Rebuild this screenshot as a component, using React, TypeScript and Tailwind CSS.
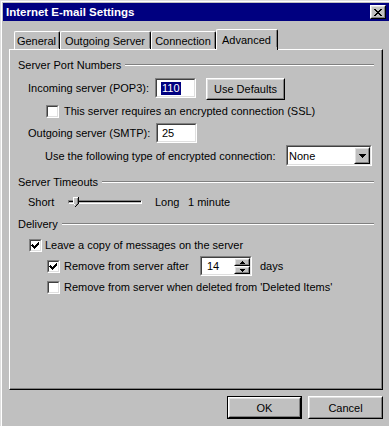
import React from 'react';

const font = "font-['Liberation_Sans',Arial,sans-serif] text-[11px] leading-[14px] text-black";

const Sunken: React.FC<{ className?: string; children?: React.ReactNode }> = ({ className = '', children }) => (
  <div className={`border border-t-[#808080] border-l-[#808080] border-b-white border-r-white ${className}`}>
    <div className="w-full h-full border border-t-[#404040] border-l-[#404040] border-b-[#dfdfdf] border-r-[#dfdfdf] bg-white flex items-center">
      {children}
    </div>
  </div>
);

const Raised: React.FC<{ className?: string; inner?: string; children?: React.ReactNode }> = ({ className = '', inner = '', children }) => (
  <div className={`border border-t-white border-l-white border-b-black border-r-black bg-[#c0c0c0] ${className}`}>
    <div className={`w-full h-full border border-t-[#dfdfdf] border-l-[#dfdfdf] border-b-[#808080] border-r-[#808080] flex items-center justify-center ${inner}`}>
      {children}
    </div>
  </div>
);

const Checkbox: React.FC<{ checked?: boolean }> = ({ checked }) => (
  <Sunken className="w-[13px] h-[13px] shrink-0">
    {checked && (
      <svg width="9" height="9" viewBox="0 0 9 9" className="block" shapeRendering="crispEdges">
        <path d="M1 3h1v1h1v1h1v-1h1v-1h1v-1h1v-1h1v3h-1v1h-1v1h-1v1h-1v1h-1v-1h-1v-1h-1v-1h-1z" fill="#000" />
      </svg>
    )}
  </Sunken>
);

const GroupHeader: React.FC<{ label: string; mt: string }> = ({ label, mt }) => (
  <div className={`flex items-center h-[14px] ${mt}`}>
    <span className="whitespace-nowrap">{label}</span>
    <div className="flex-1 ml-[4px] h-[2px] border-t border-t-[#808080] border-b border-b-white" />
  </div>
);

const Tab: React.FC<{ label: string; w: string; active?: boolean }> = ({ label, w, active }) => (
  <div
    className={`${w} ${active ? 'h-[21px] -mb-[1px] relative z-10 pb-[3px]' : 'h-[18px] pb-[1px]'} bg-[#c0c0c0] border-t border-l border-t-white border-l-white rounded-tl-[2px] rounded-tr-[2px] border-r border-r-black flex items-end`}
  >
    <div className="w-full h-full border-r border-r-[#808080] flex items-end justify-center">
      <span className="whitespace-nowrap">{label}</span>
    </div>
  </div>
);

const Arrow: React.FC<{ up?: boolean; size?: 'sm' | 'md' }> = ({ up, size = 'md' }) =>
  size === 'md' ? (
    <svg width="7" height="4" viewBox="0 0 7 4" shapeRendering="crispEdges" className="block">
      <path d="M0 0h7v1h-1v1h-1v1h-1v1h-1v-1h-1v-1h-1v-1h-1z" fill="#000" />
    </svg>
  ) : (
    <svg width="5" height="3" viewBox="0 0 5 3" shapeRendering="crispEdges" className="block">
      <path d={up ? 'M2 0h1v1h1v1h1v1h-5v-1h1v-1h1z' : 'M0 0h5v1h-1v1h-1v1h-1v-1h-1v-1h-1z'} fill="#000" />
    </svg>
  );

export default function App() {
  return (
    <div className={`w-[389px] h-[426px] bg-[#c0c0c0] border-t border-l border-t-[#dfdfdf] border-l-[#dfdfdf] ${font}`}>
      <div className="w-full h-full border-t border-l border-t-white border-l-white pt-[1px] pl-[1px]">
        {/* title bar */}
        <div className="h-[18px] bg-[#000080] flex items-center justify-between pl-[3px] pr-[3px]">
          <span className="text-white font-bold text-[11.5px] whitespace-nowrap">Internet E-mail Settings</span>
          <Raised className="w-[16px] h-[14px]">
            <svg width="8" height="7" viewBox="0 0 8 7" shapeRendering="crispEdges" className="block">
              <path d="M0 0h2v1h1v1h2v-1h1v-1h2v1h-1v1h-1v1h-1v1h1v1h1v1h1v1h-2v-1h-1v-1h-2v1h-1v1h-2v-1h1v-1h1v-1h1v-1h-1v-1h-1v-1h-1z" fill="#000" />
            </svg>
          </Raised>
        </div>

        {/* tabs */}
        <div className="mt-[8px] h-[20px] flex items-end pl-[11px]">
          <Tab label="General" w="w-[46px]" />
          <Tab label="Outgoing Server" w="w-[91px]" />
          <Tab label="Connection" w="w-[65px]" />
          <Tab label="Advanced" w="w-[62px]" active />
        </div>

        {/* panel */}
        <div className="ml-[6px] w-[374px] h-[341px] border-t border-l border-t-white border-l-white border-r border-b border-r-black border-b-black">
          <div className="w-full h-full border-r border-b border-r-[#808080] border-b-[#808080] pl-[8px] pr-[7px] flex flex-col">
            <GroupHeader label="Server Port Numbers" mt="mt-[8px]" />

            <div className="flex items-start h-[22px] mt-[6px] pl-[10px]">
              <span className="w-[127px] h-[20px] flex items-center whitespace-nowrap">Incoming server (POP3):</span>
              <Sunken className="w-[41px] h-[20px]">
                <span className="ml-[4px] bg-[#000080] text-white px-[1px] leading-[13px]">110</span>
              </Sunken>
              <Raised className="ml-[10px] w-[79px] h-[22px]">Use Defaults</Raised>
            </div>

            <div className="flex items-center h-[14px] mt-[4px] pl-[28px]">
              <Checkbox />
              <span className="ml-[5px] whitespace-nowrap">This server requires an encrypted connection (SSL)</span>
            </div>

            <div className="flex items-center h-[20px] mt-[5px] pl-[10px]">
              <span className="w-[128px] whitespace-nowrap">Outgoing server (SMTP):</span>
              <Sunken className="w-[41px] h-[20px]">
                <span className="ml-[4px]">25</span>
              </Sunken>
            </div>

            <div className="flex items-center h-[21px] mt-[2px] pl-[27px]">
              <span className="w-[241px] whitespace-nowrap">Use the following type of encrypted connection:</span>
              <Sunken className="w-[86px] h-[21px]">
                <span className="flex-1 pl-[1px]">None</span>
                <Raised className="w-[16px] h-[17px]">
                  <Arrow />
                </Raised>
              </Sunken>
            </div>

            <GroupHeader label="Server Timeouts" mt="mt-[9px]" />

            <div className="flex items-center h-[14px] mt-[6px] pl-[10px]">
              <span className="w-[40px]">Short</span>
              <div className="relative w-[74px] h-[14px] flex items-center">
                <div className="w-full h-[4px] border-t border-l border-t-[#808080] border-l-[#808080] border-b border-r border-b-white border-r-white">
                  <div className="w-full h-full border-t border-t-black bg-[#c0c0c0]" />
                </div>
                <svg width="6" height="10" viewBox="0 0 6 10" shapeRendering="crispEdges" className="absolute left-[5px] top-[2px]">
                  <path d="M0 0h6v7h-1v1h-1v1h-1v1h-1v-1h-1v-1h-1z" fill="#c0c0c0" />
                  <path d="M0 0h5v1h-4v6h1v1h-1v-1h-1z" fill="#fff" />
                  <path d="M5 0h1v7h-1v1h-1v1h-1v1h-1v-1h1v-1h1v-1h1z" fill="#000" />
                  <path d="M4 1h1v6h-1v1h-1v-1h1z" fill="#808080" />
                </svg>
              </div>
              <span className="ml-[13px] w-[33px]">Long</span>
              <span className="whitespace-nowrap">1 minute</span>
            </div>

            <GroupHeader label="Delivery" mt="mt-[8px]" />

            <div className="flex items-center h-[14px] mt-[7px] pl-[11px]">
              <Checkbox checked />
              <span className="ml-[3px] whitespace-nowrap">Leave a copy of messages on the server</span>
            </div>

            <div className="flex items-center h-[20px] mt-[4px] pl-[29px]">
              <Checkbox checked />
              <span className="ml-[4px] w-[136px] whitespace-nowrap">Remove from server after</span>
              <Sunken className="w-[52px] h-[20px]">
                <span className="flex-1 pl-[5px]">14</span>
                <div className="flex flex-col h-full w-[16px]">
                  <Raised className="w-full h-[8px]">
                    <Arrow up size="sm" />
                  </Raised>
                  <Raised className="w-full h-[8px]">
                    <Arrow size="sm" />
                  </Raised>
                </div>
              </Sunken>
              <span className="ml-[8px]">days</span>
            </div>

            <div className="flex items-center h-[14px] mt-[4px] pl-[29px]">
              <Checkbox />
              <span className="ml-[4px] whitespace-nowrap">Remove from server when deleted from 'Deleted Items'</span>
            </div>
          </div>
        </div>

        {/* buttons */}
        <div className="mt-[6px] flex justify-end gap-[6px] pr-[6px]">
          <div className="border border-black">
            <Raised className="w-[73px] h-[21px]">OK</Raised>
          </div>
          <Raised className="w-[75px] h-[23px]">Cancel</Raised>
        </div>
      </div>
    </div>
  );
}
